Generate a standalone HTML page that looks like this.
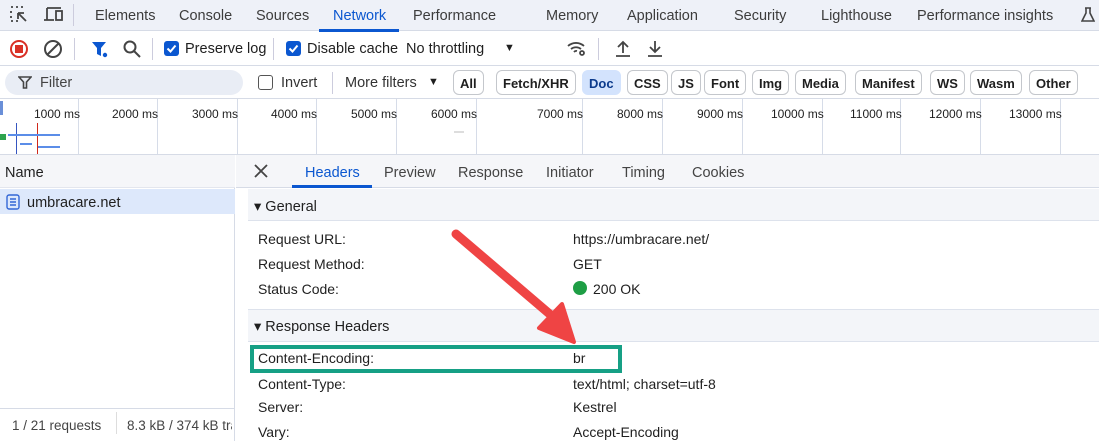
<!DOCTYPE html>
<html><head><meta charset="utf-8"><style>
*{box-sizing:border-box;margin:0;padding:0}
body{width:1099px;height:441px;overflow:hidden;font-family:"Liberation Sans",sans-serif;font-size:14px;color:#1f1f1f;background:#fff;position:relative}
.a{position:absolute;white-space:nowrap}
.tab{top:8px;font-size:14.5px;color:#3c3c3c}
.chip{top:70px;height:25px;border:1px solid #c4c7cc;border-radius:6px;font-size:13px;font-weight:600;padding:5px 6px 0;color:#1f1f1f}
.tl{top:107px;font-size:12px;color:#1f1f1f}
.vl{position:absolute;top:99px;height:55px;width:1px;background:#d6dce8}
.k{left:258px;font-size:14px}
.v{left:573px;font-size:14px}
</style></head><body>
<div class="a" style="left:0;top:0;width:1099px;height:31px;background:#eef1f8;border-bottom:1px solid #d6dbe6"></div>
<svg class="a" style="left:9px;top:5px" width="22" height="20" viewBox="0 0 22 20" fill="none" stroke="#444" stroke-width="1.8"><path d="M2 2h2M7 2h2M12 2h2M2 6v2M2 11v2M2 16h2M7 16h2" /><path d="M9 8l8 8M9 8v6M9 8h6"/></svg>
<svg class="a" style="left:43px;top:6px" width="24" height="18" viewBox="0 0 24 18" fill="none" stroke="#444" stroke-width="1.8"><path d="M4 2h14M4 2v12M1 14h10"/><rect x="13" y="5" width="6" height="9"/></svg>
<div class="a" style="left:73px;top:4px;width:1px;height:22px;background:#ccd"></div>
<div class="a tab" style="left:95px">Elements</div>
<div class="a tab" style="left:179px">Console</div>
<div class="a tab" style="left:256px">Sources</div>
<div class="a tab" style="left:333px;color:#0b57d0">Network</div>
<div class="a" style="left:319px;top:29px;width:80px;height:3px;background:#0b57d0"></div>
<div class="a tab" style="left:413px">Performance</div>
<div class="a tab" style="left:546px">Memory</div>
<div class="a tab" style="left:627px">Application</div>
<div class="a tab" style="left:734px">Security</div>
<div class="a tab" style="left:821px">Lighthouse</div>
<div class="a tab" style="left:917px">Performance insights</div>
<svg class="a" style="left:1081px;top:7px" width="14" height="16" viewBox="0 0 14 16" fill="none" stroke="#444" stroke-width="1.6"><path d="M4 1h6M5 1v5L1 14h12L9 6V1"/></svg>
<div class="a" style="left:0;top:32px;width:1099px;height:34px;background:#fff;border-bottom:1px solid #d6dbe6"></div>
<svg class="a" style="left:9px;top:39px" width="20" height="20"><circle cx="10" cy="10" r="8" fill="none" stroke="#d93025" stroke-width="2"/><rect x="6" y="6" width="8" height="8" fill="#d93025"/></svg>
<svg class="a" style="left:43px;top:39px" width="20" height="20" fill="none" stroke="#444" stroke-width="2"><circle cx="10" cy="10" r="8"/><path d="M4.5 15.5L15.5 4.5"/></svg>
<div class="a" style="left:74px;top:38px;width:1px;height:22px;background:#ccd"></div>
<svg class="a" style="left:91px;top:40px" width="22" height="18"><path d="M1 2h14l-5 6v8l-4-2V8z" fill="#0b57d0"/><circle cx="14" cy="15" r="2.2" fill="#0b57d0"/></svg>
<svg class="a" style="left:122px;top:39px" width="20" height="20" fill="none" stroke="#444" stroke-width="2"><circle cx="8" cy="8" r="5.5"/><path d="M12 12l6 6"/></svg>
<div class="a" style="left:152px;top:38px;width:1px;height:22px;background:#ccd"></div>
<div class="a" style="left:164px;top:41px;width:15px;height:15px;background:#0b57d0;border-radius:3px"></div>
<svg class="a" style="left:164px;top:41px" width="15" height="15"><path d="M3.5 7.5l3 3 5-6" stroke="#fff" stroke-width="2" fill="none"/></svg>
<div class="a" style="left:185px;top:41px;font-size:14.5px">Preserve log</div>
<div class="a" style="left:273px;top:38px;width:1px;height:22px;background:#ccd"></div>
<div class="a" style="left:286px;top:41px;width:15px;height:15px;background:#0b57d0;border-radius:3px"></div>
<svg class="a" style="left:286px;top:41px" width="15" height="15"><path d="M3.5 7.5l3 3 5-6" stroke="#fff" stroke-width="2" fill="none"/></svg>
<div class="a" style="left:307px;top:41px;font-size:14.5px">Disable cache</div>
<div class="a" style="left:406px;top:41px;font-size:14.5px">No throttling</div>
<div class="a" style="left:504px;top:42px;font-size:11px">▼</div>
<svg class="a" style="left:566px;top:39px" width="22" height="18" fill="none" stroke="#444" stroke-width="1.8"><path d="M2 7a12 12 0 0 1 16 0M5 10a8 8 0 0 1 10 0M8 13a3 3 0 0 1 3-1"/><circle cx="16" cy="14" r="2"/></svg>
<div class="a" style="left:598px;top:38px;width:1px;height:22px;background:#ccd"></div>
<svg class="a" style="left:614px;top:39px" width="18" height="20" fill="none" stroke="#444" stroke-width="1.8"><path d="M9 14V3M4 8l5-5 5 5M2 17h14"/></svg>
<svg class="a" style="left:646px;top:39px" width="18" height="20" fill="none" stroke="#444" stroke-width="1.8"><path d="M9 2v11M4 8l5 5 5-5M2 17h14"/></svg>
<div class="a" style="left:0;top:66px;width:1099px;height:33px;background:#fff;border-bottom:1px solid #d6dbe6"></div>
<div class="a" style="left:5px;top:70px;width:238px;height:25px;background:#e9edf5;border-radius:13px"></div>
<svg class="a" style="left:18px;top:76px" width="14" height="13"><path d="M1 1h12l-4.5 5v6H5.5V6z" fill="none" stroke="#444" stroke-width="1.6"/></svg>
<div class="a" style="left:40px;top:75px;font-size:14.5px;color:#444">Filter</div>
<div class="a" style="left:258px;top:75px;width:15px;height:15px;border:1.5px solid #555;border-radius:3px"></div>
<div class="a" style="left:281px;top:75px;font-size:14.5px;color:#333">Invert</div>
<div class="a" style="left:332px;top:72px;width:1px;height:22px;background:#ccd"></div>
<div class="a" style="left:345px;top:75px;font-size:14.5px;color:#333">More filters</div>
<div class="a" style="left:428px;top:76px;font-size:11px">▼</div>
<div class="a chip" style="left:453px">All</div>
<div class="a chip" style="left:496px">Fetch/XHR</div>
<div class="a chip" style="left:582px;background:#d3e3fd;border-color:#d3e3fd;color:#0b3a8c">Doc</div>
<div class="a chip" style="left:627px">CSS</div>
<div class="a chip" style="left:671px">JS</div>
<div class="a chip" style="left:704px">Font</div>
<div class="a chip" style="left:752px">Img</div>
<div class="a chip" style="left:795px">Media</div>
<div class="a chip" style="left:855px">Manifest</div>
<div class="a chip" style="left:930px">WS</div>
<div class="a chip" style="left:970px">Wasm</div>
<div class="a chip" style="left:1029px">Other</div>
<div class="a" style="left:0;top:154px;width:1099px;height:1px;background:#d6dbe6"></div>
<div class="vl" style="left:78px"></div><div class="vl" style="left:157px"></div><div class="vl" style="left:237px"></div><div class="vl" style="left:316px"></div><div class="vl" style="left:396px"></div><div class="vl" style="left:476px"></div><div class="vl" style="left:582px"></div><div class="vl" style="left:662px"></div><div class="vl" style="left:742px"></div><div class="vl" style="left:822px"></div><div class="vl" style="left:900px"></div><div class="vl" style="left:980px"></div><div class="vl" style="left:1060px"></div>
<div class="a tl" style="left:34px">1000 ms</div><div class="a tl" style="left:112px">2000 ms</div><div class="a tl" style="left:192px">3000 ms</div><div class="a tl" style="left:271px">4000 ms</div><div class="a tl" style="left:351px">5000 ms</div><div class="a tl" style="left:431px">6000 ms</div><div class="a tl" style="left:537px">7000 ms</div><div class="a tl" style="left:617px">8000 ms</div><div class="a tl" style="left:697px">9000 ms</div><div class="a tl" style="left:771px">10000 ms</div><div class="a tl" style="left:850px">11000 ms</div><div class="a tl" style="left:929px">12000 ms</div><div class="a tl" style="left:1009px">13000 ms</div>
<div class="a" style="left:0;top:101px;width:3px;height:14px;background:#6a8fd8"></div>
<div class="a" style="left:16px;top:123px;width:1px;height:31px;background:#3555c0"></div>
<div class="a" style="left:37px;top:123px;width:1px;height:31px;background:#d0281b"></div>
<div class="a" style="left:0;top:134px;width:6px;height:6px;background:#2da44e"></div>
<div class="a" style="left:8px;top:134px;width:52px;height:2px;background:#5b8de8"></div>
<div class="a" style="left:20px;top:143px;width:12px;height:2px;background:#5b8de8"></div>
<div class="a" style="left:38px;top:146px;width:22px;height:2px;background:#5b8de8"></div>
<div class="a" style="left:454px;top:131px;width:10px;height:2px;background:#ddd"></div>
<div class="a" style="left:0;top:155px;width:235px;height:286px;background:#fff;border-right:1px solid #d6dbe6"></div>
<div class="a" style="left:0;top:155px;width:235px;height:33px;background:#f5f6f9;border-bottom:1px solid #e3e6ee"></div>
<div class="a" style="left:5px;top:165px;font-size:14.5px">Name</div>
<div class="a" style="left:0;top:189px;width:235px;height:25px;background:#dde8fb"></div>
<svg class="a" style="left:6px;top:194px" width="14" height="16" fill="none" stroke="#3367d6" stroke-width="1.4"><rect x="1" y="1" width="12" height="14" rx="2"/><path d="M4 5h6M4 8h6M4 11h6"/></svg>
<div class="a" style="left:27px;top:195px;font-size:14.5px">umbracare.net</div>
<div class="a" style="left:0;top:408px;width:235px;height:1px;background:#d6dbe6"></div>
<div class="a" style="left:12px;top:418px;font-size:13.5px;color:#444">1 / 21 requests</div>
<div class="a" style="left:116px;top:412px;width:1px;height:22px;background:#ddd"></div>
<div class="a" style="left:127px;top:418px;font-size:13.5px;color:#444;width:105px;overflow:hidden">8.3 kB / 374 kB transferred</div>
<div class="a" style="left:236px;top:155px;width:863px;height:33px;background:#f5f6f9;border-bottom:1px solid #d6dbe6"></div>
<svg class="a" style="left:254px;top:164px" width="14" height="14" stroke="#444" stroke-width="1.8"><path d="M1 1l12 12M13 1L1 13"/></svg>
<div class="a" style="left:305px;top:165px;font-size:14.5px;color:#0b57d0">Headers</div>
<div class="a" style="left:292px;top:185px;width:80px;height:3px;background:#0b57d0"></div>
<div class="a" style="left:384px;top:165px;font-size:14.5px;color:#444">Preview</div>
<div class="a" style="left:458px;top:165px;font-size:14.5px;color:#444">Response</div>
<div class="a" style="left:546px;top:165px;font-size:14.5px;color:#444">Initiator</div>
<div class="a" style="left:622px;top:165px;font-size:14.5px;color:#444">Timing</div>
<div class="a" style="left:692px;top:165px;font-size:14.5px;color:#444">Cookies</div>
<div class="a" style="left:248px;top:189px;width:851px;height:32px;background:#f3f5f9;border-bottom:1px solid #dde2ec"></div>
<div class="a" style="left:254px;top:199px;font-size:14.5px">▾ General</div>
<div class="a k" style="top:231px">Request URL:</div><div class="a v" style="top:231px">https://umbracare.net/</div>
<div class="a k" style="top:256px">Request Method:</div><div class="a v" style="top:256px">GET</div>
<div class="a k" style="top:281px">Status Code:</div>
<div class="a" style="left:573px;top:281px;width:14px;height:14px;border-radius:50%;background:#1e9e45"></div>
<div class="a v" style="left:593px;top:281px">200 OK</div>
<div class="a" style="left:248px;top:309px;width:851px;height:33px;background:#f3f5f9;border-top:1px solid #dde2ec;border-bottom:1px solid #dde2ec"></div>
<div class="a" style="left:254px;top:319px;font-size:14.5px">▾ Response Headers</div>
<div class="a k" style="top:350px">Content-Encoding:</div><div class="a v" style="top:350px">br</div>
<div class="a" style="left:250px;top:345px;width:372px;height:28px;border:4px solid #16a085"></div>
<div class="a k" style="top:376px">Content-Type:</div><div class="a v" style="top:376px">text/html; charset=utf-8</div>
<div class="a k" style="top:399px">Server:</div><div class="a v" style="top:399px">Kestrel</div>
<div class="a k" style="top:424px">Vary:</div><div class="a v" style="top:424px">Accept-Encoding</div>
<svg class="a" style="left:440px;top:220px" width="150" height="130"><path d="M16 14L112 96" stroke="#ef4444" stroke-width="9" stroke-linecap="round"/><path d="M99 108L134 122L122 84Z" fill="#ef4444" stroke="#ef4444" stroke-width="4" stroke-linejoin="round"/></svg>
</body></html>
